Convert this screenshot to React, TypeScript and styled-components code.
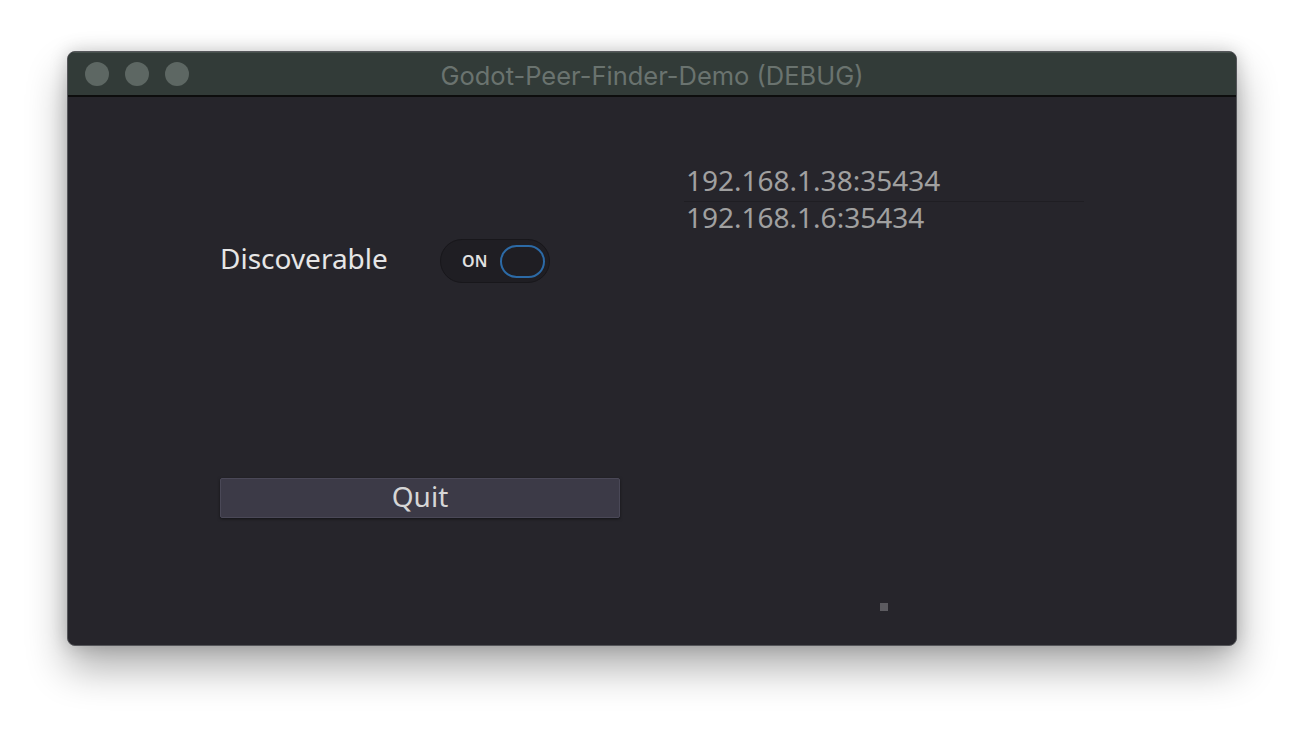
import React from 'react'
import styled, { createGlobalStyle } from 'styled-components'

const GlobalStyle = createGlobalStyle`
  html, body {
    margin: 0;
    padding: 0;
    background: #ffffff;
  }
  #root {
    min-height: 730px;
    box-sizing: border-box;
    padding-top: 51px;
  }
`

const Window = styled.div`
  width: 1170px;
  height: 595px;
  margin: 0 auto;
  box-sizing: border-box;
  display: flex;
  flex-direction: column;
  border-radius: 8px;
  overflow: hidden;
  border: 1px solid #55565a;
  box-shadow: 0 22px 40px rgba(0, 0, 0, 0.32), 0 0 18px rgba(0, 0, 0, 0.18);
  background: #26252b;
`

const TitleBar = styled.div`
  position: relative;
  height: 42px;
  flex: none;
  display: flex;
  align-items: center;
  justify-content: center;
  background: #323b38;
  border-top: 1px solid #46504c;
  border-bottom: 2px solid #0d0d0d;
`

const Lights = styled.div`
  position: absolute;
  left: 17px;
  top: 50%;
  transform: translateY(-50%);
  display: flex;
  gap: 16px;
`

const Light = styled.span`
  width: 24px;
  height: 24px;
  border-radius: 50%;
  background: #5d6763;
`

const Title = styled.div`
  font-family: Inter, 'Liberation Sans', sans-serif;
  font-size: 25.5px;
  color: #6a736f;
  margin-top: 2px;
`

const Body = styled.div`
  flex: 1;
  position: relative;
  display: flex;
  padding-left: 152px;
  gap: 64px;
  font-family: 'Noto Sans', sans-serif;
  font-size: 28px;
`

const LeftColumn = styled.div`
  width: 400px;
  display: flex;
  flex-direction: column;
  padding-top: 142px;
`

const ToggleRow = styled.div`
  display: flex;
  align-items: center;
  height: 44px;
  gap: 52px;
`

const Label = styled.span`
  color: #e6e6e6;
  margin-bottom: 6px;
`

const Switch = styled.div`
  width: 110px;
  height: 44px;
  box-sizing: border-box;
  border-radius: 22px;
  background: #1f1e23;
  border: 1px solid #18171b;
  display: flex;
  align-items: center;
  padding: 0 4px 0 21px;
  justify-content: space-between;
`

const SwitchText = styled.span`
  font-size: 16px;
  font-weight: 600;
  color: #e2e2e2;
  letter-spacing: 0.2px;
  margin-bottom: 1px;
`

const Knob = styled.span`
  width: 45px;
  height: 33px;
  box-sizing: border-box;
  border-radius: 17px;
  border: 2px solid #2c6aa6;
`

const QuitButton = styled.button`
  margin-top: 195px;
  width: 400px;
  height: 40px;
  box-sizing: border-box;
  border-radius: 2px;
  background: #3c3a47;
  border: 1px solid #4a4857;
  box-shadow: 0 1px 3px rgba(0, 0, 0, 0.5);
  font-family: 'Noto Sans', sans-serif;
  font-size: 28px;
  line-height: 30px;
  color: #d6d6d6;
  padding: 0 0 4px;
`

const PeerList = styled.div`
  width: 400px;
  padding-top: 68px;
  display: flex;
  flex-direction: column;
`

const Peer = styled.div<{ divider?: boolean }>`
  height: 36px;
  line-height: 30px;
  padding-left: 2px;
  color: #a0a0a0;
  border-bottom: 1px solid ${({ divider }) => (divider ? '#1f1e23' : 'transparent')};
`

const Marker = styled.span`
  position: absolute;
  left: 812px;
  top: 506px;
  width: 8px;
  height: 8px;
  background: #5c5b60;
`

const peers = ['192.168.1.38:35434', '192.168.1.6:35434']

export default function App() {
  return (
    <>
      <GlobalStyle />
      <Window>
        <TitleBar>
          <Lights>
            <Light />
            <Light />
            <Light />
          </Lights>
          <Title>Godot-Peer-Finder-Demo (DEBUG)</Title>
        </TitleBar>
        <Body>
          <LeftColumn>
            <ToggleRow>
              <Label>Discoverable</Label>
              <Switch>
                <SwitchText>ON</SwitchText>
                <Knob />
              </Switch>
            </ToggleRow>
            <QuitButton>Quit</QuitButton>
          </LeftColumn>
          <PeerList>
            {peers.map((peer, index) => (
              <Peer key={peer} divider={index < peers.length - 1}>
                {peer}
              </Peer>
            ))}
          </PeerList>
          <Marker />
        </Body>
      </Window>
    </>
  )
}
